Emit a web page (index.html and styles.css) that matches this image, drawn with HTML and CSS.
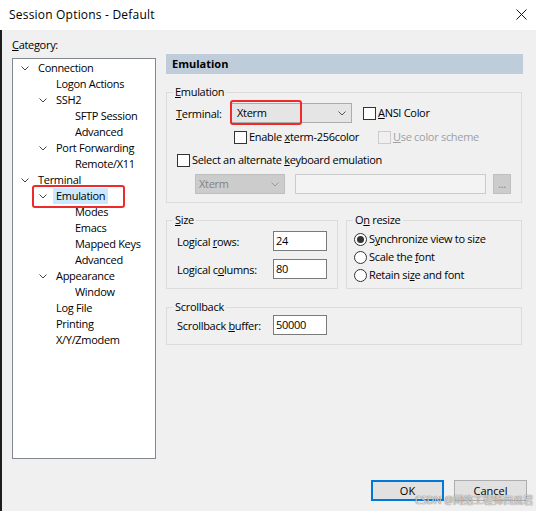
FILE: index.html
```html
<!DOCTYPE html>
<html>
<head>
<meta charset="utf-8">
<title>Session Options - Default</title>
<link rel="stylesheet" href="styles.css">
</head>
<body>
<div class="win">
  <div class="titlebar">
    <span class="title">Session Options - Default</span>
    <svg class="close" width="11" height="11" viewBox="0 0 11 11"><path d="M0.5 0.5L10.5 10.5M10.5 0.5L0.5 10.5" stroke="#111" stroke-width="1" fill="none"/></svg>
  </div>
  <div class="client">
    <div class="content">
      <div class="left">
        <div class="cat"><u>C</u>ategory:</div>
        <div class="tree">
          <div class="node l0"><span class="tw"><svg width="8" height="5" viewBox="0 0 8 5"><path d="M0.5 0.5L4 4L7.5 0.5" stroke="#444" fill="none"/></svg></span><span class="lbl">Connection</span></div>
          <div class="node l1"><span class="tw"></span><span class="lbl">Logon Actions</span></div>
          <div class="node l1"><span class="tw"><svg width="8" height="5" viewBox="0 0 8 5"><path d="M0.5 0.5L4 4L7.5 0.5" stroke="#444" fill="none"/></svg></span><span class="lbl">SSH2</span></div>
          <div class="node l2"><span class="tw"></span><span class="lbl">SFTP Session</span></div>
          <div class="node l2"><span class="tw"></span><span class="lbl">Advanced</span></div>
          <div class="node l1"><span class="tw"><svg width="8" height="5" viewBox="0 0 8 5"><path d="M0.5 0.5L4 4L7.5 0.5" stroke="#444" fill="none"/></svg></span><span class="lbl">Port Forwarding</span></div>
          <div class="node l2"><span class="tw"></span><span class="lbl">Remote/X11</span></div>
          <div class="node l0"><span class="tw"><svg width="8" height="5" viewBox="0 0 8 5"><path d="M0.5 0.5L4 4L7.5 0.5" stroke="#444" fill="none"/></svg></span><span class="lbl">Terminal</span></div>
          <div class="node l1"><span class="tw"><svg width="8" height="5" viewBox="0 0 8 5"><path d="M0.5 0.5L4 4L7.5 0.5" stroke="#444" fill="none"/></svg></span><span class="lbl sel">Emulation</span></div>
          <div class="node l2"><span class="tw"></span><span class="lbl">Modes</span></div>
          <div class="node l2"><span class="tw"></span><span class="lbl">Emacs</span></div>
          <div class="node l2"><span class="tw"></span><span class="lbl">Mapped Keys</span></div>
          <div class="node l2"><span class="tw"></span><span class="lbl">Advanced</span></div>
          <div class="node l1"><span class="tw"><svg width="8" height="5" viewBox="0 0 8 5"><path d="M0.5 0.5L4 4L7.5 0.5" stroke="#444" fill="none"/></svg></span><span class="lbl">Appearance</span></div>
          <div class="node l2"><span class="tw"></span><span class="lbl">Window</span></div>
          <div class="node l1"><span class="tw"></span><span class="lbl">Log File</span></div>
          <div class="node l1"><span class="tw"></span><span class="lbl">Printing</span></div>
          <div class="node l1"><span class="tw"></span><span class="lbl">X/Y/Zmodem</span></div>
          <div class="mark mark-tree"></div>
        </div>
      </div>
      <div class="right">
        <div class="header">Emulation</div>
        <fieldset class="grp g-emu">
          <legend><u>E</u>mulation</legend>
          <div class="inner emu-inner">
            <div class="r1">
              <span class="flabel term-lbl"><u>T</u>erminal:</span>
              <div class="combo">
                <span class="ctext">Xterm</span>
                <svg class="chev" width="8" height="5" viewBox="0 0 8 5"><path d="M0.5 0.5L4 4L7.5 0.5" stroke="#555" fill="none"/></svg>
                <div class="mark mark-combo"></div>
              </div>
              <span class="cb ansi"></span><span class="cbl"><u>A</u>NSI Color</span>
            </div>
            <div class="r2">
              <span class="item256"><span class="cb"></span><span class="cbl">Enable <u>x</u>term-256color</span></span>
              <span class="cb dis"></span><span class="cbl dis-t"><u>U</u>se color scheme</span>
            </div>
            <div class="r3">
              <span class="cb"></span><span class="cbl">Select an alternate <u>k</u>eyboard emulation</span>
            </div>
            <div class="r4">
              <div class="combo dis-combo">
                <span class="ctext">Xterm</span>
                <svg class="chev" width="8" height="5" viewBox="0 0 8 5"><path d="M0.5 0.5L4 4L7.5 0.5" stroke="#9a9a9a" fill="none"/></svg>
              </div>
              <div class="dis-field"></div>
              <div class="dis-btn">...</div>
            </div>
          </div>
        </fieldset>
        <div class="pair">
          <fieldset class="grp g-size">
            <legend><u>S</u>ize</legend>
            <div class="inner size-inner">
              <div class="frow"><span class="flabel wide">Logical <u>r</u>ows:</span><div class="edit">24</div></div>
              <div class="frow"><span class="flabel wide">Logical c<u>o</u>lumns:</span><div class="edit">80</div></div>
            </div>
          </fieldset>
          <fieldset class="grp g-resize">
            <legend>O<u>n</u> resize</legend>
            <div class="inner resize-inner">
              <div class="rrow"><span class="radio on"></span><span class="cbl">S<u>y</u>nchronize view to size</span></div>
              <div class="rrow"><span class="radio"></span><span class="cbl">Scale the <u>f</u>ont</span></div>
              <div class="rrow"><span class="radio"></span><span class="cbl">Retain si<u>z</u>e and font</span></div>
            </div>
          </fieldset>
        </div>
        <fieldset class="grp g-scroll">
          <legend>Scrollback</legend>
          <div class="inner scroll-inner">
            <div class="frow"><span class="flabel wide">Scrollback <u>b</u>uffer:</span><div class="edit">50000</div></div>
          </div>
        </fieldset>
      </div>
    </div>
    <div class="footer">
      <div class="btn default">OK</div>
      <div class="btn">Cancel</div>
    </div>
    <div class="watermark">CSDN @网络工程师西瓜君</div>
  </div>
</div>
</body>
</html>
```

FILE: styles.css
```css
* { box-sizing: border-box; }
html, body { margin: 0; padding: 0; }
body {
  width: 536px;
  height: 511px;
  overflow: hidden;
  font-family: "Open Sans", "Noto Sans", "Noto Sans CJK SC", sans-serif;
  font-size: 11px;
  letter-spacing: -0.3px;
  color: #000;
  background: #f0f0f0;
}
u { text-decoration: underline; text-underline-offset: 1px; }
.win { width: 536px; height: 511px; display: flex; flex-direction: column; }

.titlebar {
  height: 30px;
  background: #fff;
  display: flex;
  align-items: center;
  justify-content: space-between;
  padding: 0 9px 0 9px;
}
.title { font-size: 12px; line-height: 16px; letter-spacing: 0.2px; }
.close { margin-right: 0; margin-top: -1px; }

.client {
  position: relative;
  flex: 1;
  background: #f0f0f0;
  box-shadow: inset 2px 0 #1e1e1e;
  display: flex;
  flex-direction: column;
}
.content { display: flex; padding-left: 12px; }
.left { width: 144px; padding-top: 7px; }
.cat { line-height: 16px; height: 16px; }
.tree {
  position: relative;
  margin-top: 5px;
  width: 144px;
  height: 401px;
  background: #fff;
  border: 1px solid #828790;
  padding-top: 1px;
}
.node { display: flex; align-items: center; height: 16px; line-height: 16px; white-space: nowrap; }
.l0 { padding-left: 7px; }
.l1 { padding-left: 25px; }
.l2 { padding-left: 44px; }
.tw { width: 18px; height: 16px; display: flex; align-items: center; padding-left: 1px; padding-top: 1px; }
.lbl.sel { background: #cce8ff; padding: 0 3px; margin-left: -3px; }

.mark { position: absolute; border: 2px solid #ee2b2b; border-radius: 3px; pointer-events: none; }
.mark-tree { left: 19px; top: 126px; width: 93px; height: 23px; }
.mark-combo { left: -1px; top: -4px; width: 72px; height: 25px; }

.right { width: 357px; margin-left: 10px; padding-top: 24px; }
.header {
  height: 20px;
  line-height: 20px;
  background: #bfcddb;
  font-weight: bold;
  letter-spacing: 0;
  padding-left: 6px;
}
.grp {
  margin: 0;
  padding: 0;
  border: 1px solid #dcdcdc;
  min-width: 0;
}
.grp legend {
  margin-left: 6px;
  padding: 0 2px;
  line-height: 16px;
  height: 16px;
}
.g-emu { width: 356px; margin-top: 10px; }
.inner { padding-left: 9px; }
.emu-inner { padding-top: 3px; padding-bottom: 8px; }
.r1 { display: flex; align-items: center; height: 20px; }
.term-lbl { width: 54px; }
.combo {
  position: relative;
  width: 122px;
  height: 20px;
  background: #e5e5e5;
  border: 1px solid #adadad;
  display: flex;
  align-items: center;
  justify-content: space-between;
  padding: 0 5px 0 6px;
}
.ctext { line-height: 16px; }
.cb {
  width: 13px;
  height: 13px;
  border: 1px solid #333;
  background: #fff;
  flex: none;
}
.ansi { margin-left: 11px; }
.cbl { margin-left: 2px; line-height: 16px; white-space: nowrap; }
.r2 { display: flex; align-items: center; height: 16px; margin-top: 6px; }
.item256 { display: flex; align-items: center; width: 144px; margin-left: 58px; }
.cb.dis { border-color: #cccccc; background: #f0f0f0; }
.dis-t { color: #a0a0a0; }
.r3 { display: flex; align-items: center; height: 16px; margin-top: 7px; padding-left: 1px; }
.r4 { display: flex; align-items: center; height: 20px; margin-top: 6px; }
.dis-combo {
  margin-left: 19px;
  width: 90px;
  background: #cccccc;
  border-color: #bfbfbf;
  color: #838383;
  padding-left: 3px;
}
.dis-field {
  margin-left: 10px;
  width: 191px;
  height: 20px;
  background: #f3f3f3;
  border: 1px solid #cccccc;
}
.dis-btn {
  margin-left: 7px;
  width: 18px;
  height: 20px;
  background: #cccccc;
  border: 1px solid #bfbfbf;
  color: #838383;
  text-align: center;
  line-height: 18px;
}

.pair { display: flex; margin-top: 9px; gap: 8px; }
.g-size { width: 172px; }
.g-resize { width: 176px; }
.size-inner { padding-top: 3px; padding-bottom: 9px; display: flex; flex-direction: column; gap: 8px; }
.frow { display: flex; align-items: center; height: 20px; }
.flabel.wide { width: 97px; padding-left: 1px; }
.edit {
  width: 54px;
  height: 20px;
  background: #fff;
  border: 1px solid #7a7a7a;
  padding-left: 2px;
  line-height: 18px;
}
.resize-inner { padding-left: 7px; padding-top: 2px; padding-bottom: 4px; }
.rrow { display: flex; align-items: center; height: 18px; }
.radio {
  width: 13px;
  height: 13px;
  border: 1px solid #333;
  border-radius: 50%;
  background: #fff;
  flex: none;
  display: flex;
  align-items: center;
  justify-content: center;
}
.radio.on::after {
  content: "";
  width: 7px;
  height: 7px;
  border-radius: 50%;
  background: #333;
}
.g-scroll { width: 356px; margin-top: 10px; }
.scroll-inner { padding-top: 0px; padding-bottom: 9px; }

.footer {
  display: flex;
  justify-content: flex-end;
  gap: 10px;
  padding-right: 9px;
  margin-top: 21px;
}
.btn {
  width: 73px;
  height: 21px;
  background: #e1e1e1;
  border: 1px solid #adadad;
  text-align: center;
  line-height: 19px;
  letter-spacing: 0;
}
.btn.default { border: 2px solid #0078d7; line-height: 17px; }
.watermark {
  position: absolute;
  left: 415px;
  top: 463px;
  font-size: 10px;
  line-height: 14px;
  letter-spacing: 0;
  color: rgba(235,235,235,0.85);
  text-shadow: 0 0 1px rgba(90,90,90,0.8), 0 0 1px rgba(90,90,90,0.6);
  white-space: nowrap;
  font-family: "Noto Sans", "Noto Sans CJK SC", sans-serif;
}
```
